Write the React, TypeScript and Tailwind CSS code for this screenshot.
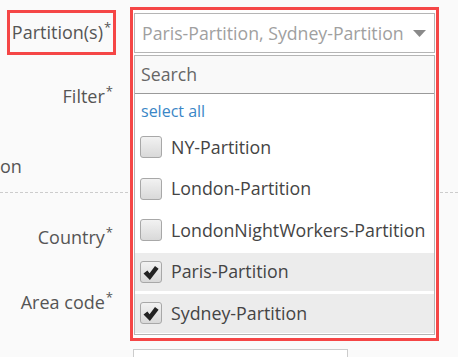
import React from 'react';

const items = [
  { name: 'NY-Partition', checked: false },
  { name: 'London-Partition', checked: false },
  { name: 'LondonNightWorkers-Partition', checked: false },
  { name: 'Paris-Partition', checked: true },
  { name: 'Sydney-Partition', checked: true },
];

const Req: React.FC = () => <span className="text-[13px] ml-[1px] relative -top-[7px]">*</span>;

const Checkbox: React.FC<{ checked: boolean }> = ({ checked }) => (
  <span className="w-[22px] h-[22px] shrink-0 rounded-[3px] border border-[#a8a8a8] bg-gradient-to-b from-[#f2f2f2] to-[#d9d9d9] flex items-center justify-center">
    {checked && (
      <svg viewBox="0 0 16 16" className="w-[16px] h-[16px] mt-[2px]">
        <path d="M0.5 8.6 L4.4 5.6 L6.6 8.3 L12 1 L15.6 3.8 L6.9 15 Z" fill="#222" />
      </svg>
    )}
  </span>
);

const App: React.FC = () => {
  return (
    <div
      className="relative w-[458px] h-[357px] overflow-hidden bg-[#fafafa] text-[#555]"
      style={{ fontFamily: '"Open Sans", "Liberation Sans", sans-serif' }}
    >
      <div className="pt-[10px]">
        <div className="ml-[7px] w-[109px] h-[45px] border-[3px] border-[#f54646] flex items-center justify-center text-[18px]">
          <span>Partition(s)<Req /></span>
        </div>
        <div className="h-[82px] flex items-center">
          <div className="w-[113px] text-right text-[18px]">Filter<Req /></div>
        </div>
        <div className="h-[56px] flex items-center pt-[4px] border-b border-dashed border-[#ccc]">
          <span className="text-[18px]">on</span>
        </div>
        <div className="h-[88px] flex items-center">
          <div className="w-[113px] text-right text-[18px]">Country<Req /></div>
        </div>
        <div className="h-[42px] flex items-center">
          <div className="w-[113px] text-right text-[18px]">Area code<Req /></div>
        </div>
        <div className="mt-[26px] ml-[133px] w-[215px] h-[30px] border border-[#ccc] bg-white" />
      </div>

      {/* open multiselect dropdown with annotation frame */}
      <div className="absolute left-[130px] top-[7px] w-[309px] h-[334px] border-[3px] border-[#f54646] bg-white pt-[3px] px-[1px]">
        <div className="h-[40px] border border-[#b5b5b5] flex items-center pl-[7px] pr-[8px] text-[17.7px] text-[#a0a0a0]">
          <span className="flex-1 truncate">Paris-Partition, Sydney-Partition</span>
          <svg viewBox="0 0 13 7" className="w-[13px] h-[7px]">
            <path d="M0 0 H13 L6.5 7 Z" fill="#8a8a8a" />
          </svg>
        </div>
        <div className="mt-[2px] h-[280px] border border-[#b5b5b5]">
          <div className="h-[38px] bg-[#f9f9f9] border-b border-[#9a9a9a] flex items-center pl-[6px] text-[17.7px] text-[#666]">
            Search
          </div>
          <div className="h-[34px] flex items-center pl-[6px] text-[16px] text-[#3a86c6]">select all</div>
          <div className="flex flex-col gap-[3px]">
            {items.map((it) => (
              <div
                key={it.name}
                className={`h-[38.5px] flex items-center gap-[9px] pl-[5px] text-[17.8px] text-[#444] ${it.checked ? 'bg-[#ececec]' : ''}`}
              >
                <Checkbox checked={it.checked} />
                <span>{it.name}</span>
              </div>
            ))}
          </div>
        </div>
      </div>
    </div>
  );
};

export default App;
